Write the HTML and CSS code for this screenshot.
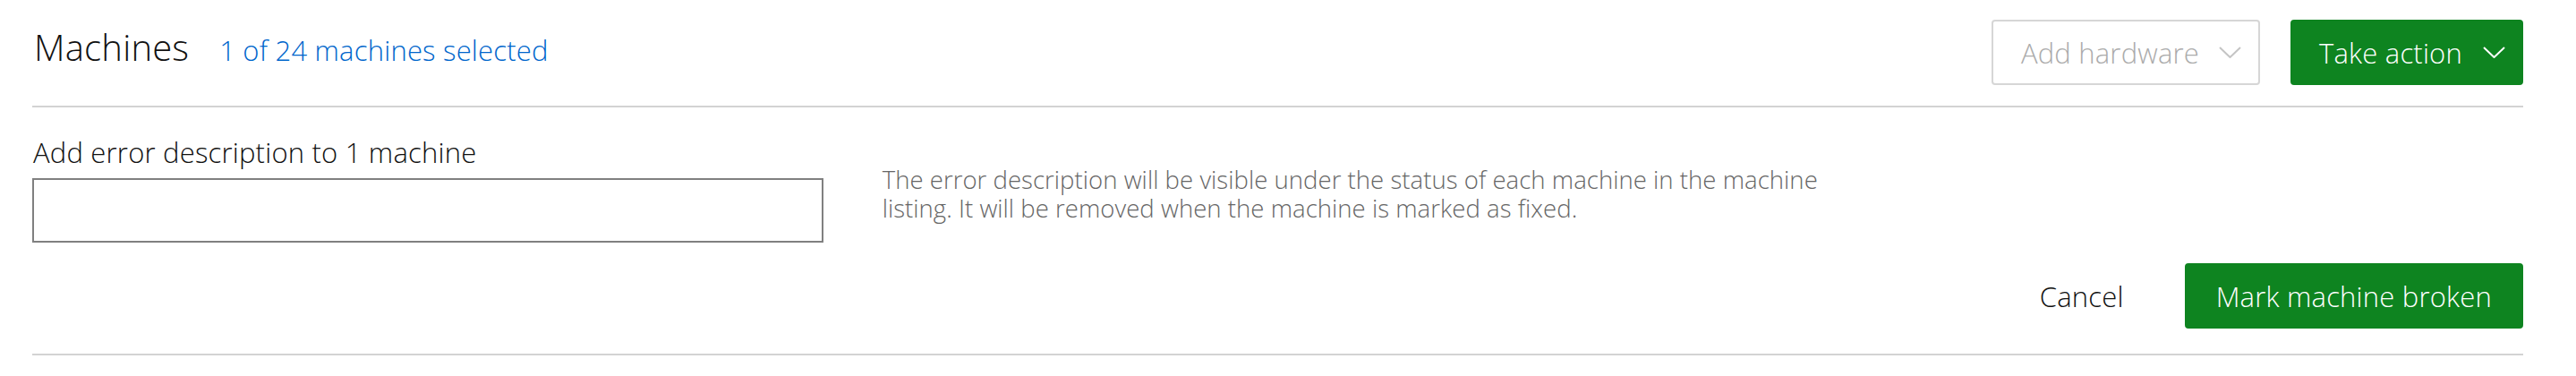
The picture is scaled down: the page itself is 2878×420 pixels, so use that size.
FILE: index.html
```html
<!DOCTYPE html>
<html lang="en">
<head>
<meta charset="utf-8">
<title>Machines</title>
<link rel="stylesheet" href="styles.css">
</head>
<body>
<div class="page">
  <header class="section-header">
    <div class="title-group">
      <h1 class="title">Machines</h1>
      <span class="subtitle">1 of 24 machines selected</span>
    </div>
    <div class="header-actions">
      <button class="btn btn-neutral is-disabled" disabled>
        <span>Add hardware</span>
        <svg class="chevron" viewBox="0 0 25 13" width="25" height="13" aria-hidden="true"><path d="M1 1 L12.5 12 L24 1" fill="none" stroke="currentColor" stroke-width="2"/></svg>
      </button>
      <button class="btn btn-positive btn-dropdown">
        <span>Take action</span>
        <svg class="chevron" viewBox="0 0 25 13" width="25" height="13" aria-hidden="true"><path d="M1 1 L12.5 12 L24 1" fill="none" stroke="currentColor" stroke-width="2"/></svg>
      </button>
    </div>
  </header>

  <form class="action-form">
    <div class="form-grid">
      <div class="field">
        <label class="field-label" for="err">Add error description to 1 machine</label>
        <input class="field-input" id="err" type="text">
      </div>
      <p class="help-text">The error description will be visible under the status of each machine in the machine listing. It will be removed when the machine is marked as fixed.</p>
    </div>
    <div class="form-actions">
      <button type="button" class="btn btn-base">Cancel</button>
      <button type="button" class="btn btn-positive btn-submit">Mark machine broken</button>
    </div>
  </form>
</div>
</body>
</html>
```

FILE: styles.css
```css
* { box-sizing: border-box; }

html, body {
  margin: 0;
  padding: 0;
  background: #fff;
}

body {
  font-family: "Open Sans", "Lato", sans-serif;
  font-weight: 300;
  color: #111;
  letter-spacing: 0.2px;
}

.page {
  padding: 0 59px 0 36px;
}

.section-header {
  display: flex;
  justify-content: space-between;
  align-items: flex-start;
  padding-top: 22px;
  padding-bottom: 23px;
  border-bottom: 2px solid #d3d3d3;
}

.title-group {
  display: flex;
  align-items: baseline;
  gap: 34px;
  margin-top: 7px;
  padding-left: 2px;
}

.title {
  margin: 0;
  font-size: 40px;
  font-weight: 300;
  line-height: 48px;
  color: #111;
}

.subtitle {
  font-size: 31px;
  line-height: 45px;
  color: #0066cc;
}

.header-actions {
  display: flex;
  gap: 34px;
}

.btn {
  display: inline-flex;
  align-items: center;
  height: 73px;
  padding: 0 36px;
  border: 2px solid transparent;
  border-radius: 4px;
  font-family: inherit;
  font-weight: 300;
  font-size: 31px;
  line-height: 36px;
  letter-spacing: 0.2px;
  background: transparent;
  color: #111;
  cursor: pointer;
}

.btn-neutral {
  background: #fff;
  border-color: #d6d6d6;
  padding: 0 19px 0 31px;
  gap: 22px;
}

.btn-neutral.is-disabled {
  color: #ababab;
  cursor: not-allowed;
}

.btn-positive {
  background: #0e8420;
  border-color: #0e8420;
  color: #fff;
}

.btn-dropdown {
  padding: 0 18px 0 30px;
  gap: 23px;
}

.chevron {
  display: block;
  flex: none;
}

.btn-neutral .chevron {
  color: #c4c4c4;
}

.action-form {
  padding-top: 28px;
  border-bottom: 2px solid #d3d3d3;
  padding-bottom: 28px;
}

.form-grid {
  display: grid;
  grid-template-columns: repeat(12, 1fr);
  column-gap: 66px;
}

.field {
  grid-column: 1 / 5;
}

.field-label {
  display: block;
  font-size: 31px;
  line-height: 45px;
  margin-bottom: 6px;
  padding-left: 1px;
  color: #111;
}

.field-input {
  display: block;
  width: 100%;
  height: 72px;
  margin: 0;
  border: 2px solid #808080;
  border-radius: 0;
  background: #fff;
  font: inherit;
  font-size: 31px;
  padding: 0 16px;
}

.help-text {
  grid-column: 5 / 10;
  margin: 0;
  padding-top: 37px;
  font-size: 27.5px;
  line-height: 32px;
  letter-spacing: 0.05px;
  color: #666;
}

.form-actions {
  display: flex;
  justify-content: flex-end;
  align-items: center;
  gap: 30px;
  margin-top: 23px;
}

.btn-base {
  padding: 0 36px;
}

.btn-submit {
  padding: 0 33px;
}
```
